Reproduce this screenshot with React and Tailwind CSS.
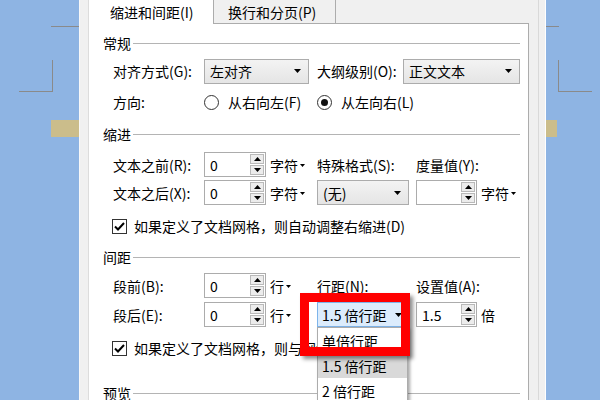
import React from 'react';

function Tri({ up }) {
  return (
    <svg width="7" height="4" viewBox="0 0 7 4">
      <path d={up ? 'M0 4 L3.5 0 L7 4 Z' : 'M0 0 L7 0 L3.5 4 Z'} fill="#000" />
    </svg>
  );
}

function SmallTri() {
  return (
    <svg width="5" height="3" viewBox="0 0 5 3" className="ml-[2px] mt-[2px]">
      <path d="M0 0 L5 0 L2.5 3 Z" fill="#000" />
    </svg>
  );
}

function Spin({ value, width }) {
  return (
    <div className={`flex h-[25px] shrink-0 border border-[#acacac] bg-white ${width}`}>
      <div className="flex flex-1 items-center pl-[5px]">{value}</div>
      <div className="flex w-[15px] flex-col gap-px py-px pr-px">
        <div className="flex flex-1 items-center justify-center border border-[#b9b9b9] bg-[#ececec]">
          <Tri up />
        </div>
        <div className="flex flex-1 items-center justify-center border border-[#b9b9b9] bg-[#ececec]">
          <Tri />
        </div>
      </div>
    </div>
  );
}

function Select({ value, width }) {
  return (
    <div
      className={`flex h-[25px] shrink-0 items-center justify-between border border-[#acacac] bg-gradient-to-b from-[#f3f3f3] to-[#e5e5e5] pl-[5px] pr-[7px] ${width}`}
    >
      <span>{value}</span>
      <Tri />
    </div>
  );
}

function Unit({ text }) {
  return (
    <div className="ml-[4px] flex items-center">
      <span>{text}</span>
      <SmallTri />
    </div>
  );
}

function Header({ text, className }) {
  return (
    <div className={`flex h-[20px] items-center pl-[14px] pr-[8px] ${className}`}>
      <span>{text}</span>
      <div className="ml-[2px] h-px flex-1 bg-[#b4b4b4]" />
    </div>
  );
}

function Check({ text, className }) {
  return (
    <div className={`flex h-[24px] items-center pl-[23px] ${className}`}>
      <div className="flex h-[15px] w-[15px] items-center justify-center border border-[#333] bg-white">
        <svg width="11" height="9" viewBox="0 0 11 9">
          <path d="M1 4.5 L4 7.5 L10 1" stroke="#000" strokeWidth="2" fill="none" />
        </svg>
      </div>
      <span className="ml-[7px] whitespace-nowrap">{text}</span>
    </div>
  );
}

function Radio({ checked, text }) {
  return (
    <div className="flex items-center">
      <div className="flex h-[15px] w-[15px] items-center justify-center rounded-full border border-[#333] bg-white">
        {checked && <div className="h-[7px] w-[7px] rounded-full bg-[#111]" />}
      </div>
      <span className="ml-[9px]">{text}</span>
    </div>
  );
}

function Panel() {
  return (
    <div className="relative flex w-[441px] shrink-0 flex-col">
      <div className="flex h-[24px] shrink-0">
        <div className="flex w-[126px] items-center border-l border-r border-[#dcdcdc] border-r-[#acacac] bg-white pl-[21px]">
          缩进和间距(I)
        </div>
        <div className="flex w-[122px] items-center border-r border-b border-[#acacac] bg-[#f0f0f0] pl-[14px]">
          换行和分页(P)
        </div>
        <div className="flex-1 border-b border-[#acacac]" />
      </div>
      <div className="flex flex-1 flex-col border-l border-r border-[#dcdcdc] border-r-[#acacac] bg-white">
        <Header text="常规" className="mt-[9px]" />

        <div className="mt-[5px] flex h-[26px] items-center pl-[24px]">
          <div className="w-[91px]">对齐方式(G):</div>
          <div className="w-[113px]">
            <Select value="左对齐" width="w-[105px]" />
          </div>
          <div className="w-[86px] whitespace-nowrap">大纲级别(O):</div>
          <Select value="正文文本" width="w-[117px]" />
        </div>

        <div className="mt-[5px] flex h-[26px] items-center pl-[24px]">
          <div className="w-[91px]">方向:</div>
          <div className="w-[113px]">
            <Radio text="从右向左(F)" />
          </div>
          <Radio checked text="从左向右(L)" />
        </div>

        <Header text="缩进" className="mt-[9px]" />

        <div className="mt-[8px] flex h-[25px] items-center pl-[24px]">
          <div className="w-[91px]">文本之前(R):</div>
          <div className="flex w-[113px]">
            <Spin value="0" width="w-[62px]" />
            <Unit text="字符" />
          </div>
          <div className="w-[99px]">特殊格式(S):</div>
          <div>度量值(Y):</div>
        </div>

        <div className="mt-[3px] flex h-[25px] items-center pl-[24px]">
          <div className="w-[91px]">文本之后(X):</div>
          <div className="flex w-[113px]">
            <Spin value="0" width="w-[62px]" />
            <Unit text="字符" />
          </div>
          <div className="w-[99px]">
            <Select value="(无)" width="w-[92px]" />
          </div>
          <Spin value="" width="w-[61px]" />
          <Unit text="字符" />
        </div>

        <Check text="如果定义了文档网格，则自动调整右缩进(D)" className="mt-[9px]" />

        <Header text="间距" className="mt-[9px]" />

        <div className="mt-[6px] flex h-[25px] items-center pl-[24px]">
          <div className="w-[91px]">段前(B):</div>
          <div className="flex w-[113px]">
            <Spin value="0" width="w-[62px]" />
            <Unit text="行" />
          </div>
          <div className="w-[99px]">行距(N):</div>
          <div>设置值(A):</div>
        </div>

        <div className="mt-[4px] flex h-[25px] items-center pl-[24px]">
          <div className="w-[91px]">段后(E):</div>
          <div className="flex w-[113px]">
            <Spin value="0" width="w-[62px]" />
            <Unit text="行" />
          </div>
          <div className="w-[99px]">
            <div className="flex h-[25px] w-[91px] items-center justify-between border border-[#7eb4ea] bg-[#dcecfc] pl-[4px] pr-[5px]">
              <span>1.5 倍行距</span>
              <Tri />
            </div>
          </div>
          <Spin value="1.5" width="w-[61px]" />
          <div className="ml-[4px]">倍</div>
        </div>

        <Check text="如果定义了文档网格，则与网格对齐(W)" className="mt-[9px]" />

        <Header text="预览" className="mt-[23px]" />
      </div>

      <div className="absolute left-[229px] top-[327px] w-[91px] border border-[#acacac] bg-white shadow-[2px_2px_3px_rgba(0,0,0,0.35)]">
        <div className="flex h-[25px] items-center pl-[4px]">单倍行距</div>
        <div className="flex h-[25px] items-center bg-[#d9d9d9] pl-[4px]">1.5 倍行距</div>
        <div className="flex h-[25px] items-center pl-[4px]">2 倍行距</div>
      </div>

      <div className="absolute left-[212px] top-[293px] h-[63px] w-[110px] border-[9px] border-[#ff0000] shadow-[3px_3px_4px_rgba(0,0,0,0.45)]" />
    </div>
  );
}

export default function App() {
  return (
    <div className="flex h-[400px] w-[600px] overflow-hidden bg-[#8eb4e3] font-['Noto_Sans_CJK_SC','Liberation_Sans',sans-serif] text-[14px] leading-[20px] text-black">
      <div className="flex w-[79px] shrink-0 flex-col">
        <div className="h-[26px]" />
        <div className="ml-[51px] h-px bg-[#8a8a8a]" />
        <div className="h-[33px]" />
        <div className="ml-[19px] h-[32px] w-[34px] border-r border-b border-[#8a8a8a]" />
        <div className="h-[28px]" />
        <div className="ml-[51px] h-[17px] bg-[#cbbd8b]" />
      </div>

      <div className="flex w-[467px] shrink-0 border-l border-[#f8f8f8] bg-[#f0f0f0]">
        <div className="w-[8px] shrink-0" />
        <Panel />
        <div className="w-[9px] shrink-0" />
        <div className="w-px shrink-0 bg-[#d9d9d9]" />
        <div className="w-[6px] shrink-0" />
        <div className="w-px shrink-0 bg-white" />
      </div>

      <div className="flex flex-1 flex-col">
        <div className="h-[26px]" />
        <div className="h-px w-[13px] bg-[#8a8a8a]" />
        <div className="h-[33px]" />
        <div className="ml-[12px] h-[32px] w-[34px] border-l border-b border-[#8a8a8a]" />
        <div className="h-[28px]" />
        <div className="h-[17px] w-[11px] bg-[#cbbd8b]" />
      </div>
    </div>
  );
}
